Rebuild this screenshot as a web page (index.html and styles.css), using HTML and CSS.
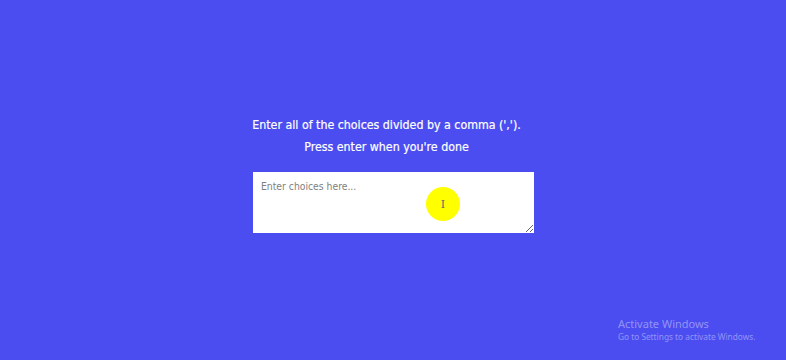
FILE: index.html
```html
<!DOCTYPE html>
<html lang="en">
<head>
<meta charset="utf-8">
<title>Choice picker</title>
<link rel="stylesheet" href="styles.css">
</head>
<body>
<main class="page">
  <div class="prompt">
    <p class="line">Enter all of the choices divided by a comma (',').</p>
    <p class="line">Press enter when you're done</p>
  </div>
  <div class="field">
    <textarea class="choices" placeholder="Enter choices here..."></textarea>
    <div class="cursor-dot"><span class="ibeam">I</span></div>
  </div>
</main>
<div class="watermark">
  <div class="wm-title">Activate Windows</div>
  <div class="wm-sub">Go to Settings to activate Windows.</div>
</div>
</body>
</html>
```
FILE: styles.css
```css
html, body {
  margin: 0;
  padding: 0;
  height: 100%;
}
body {
  background: #4b4df1;
  font-family: "DejaVu Sans Condensed", "DejaVu Sans", sans-serif;
  overflow: hidden;
}
.page {
  display: flex;
  flex-direction: column;
  align-items: center;
  padding-top: 116px;
}
.prompt {
  display: flex;
  flex-direction: column;
  align-items: center;
  gap: 3px;
  margin-right: 13px;
}
.line {
  margin: 0;
  color: #ffffff;
  font-size: 12.3px;
  line-height: 19px;
  -webkit-text-stroke: 0.2px #ffffff;
}
.field {
  position: relative;
  margin-top: 15px;
  margin-left: 1px;
}
.choices {
  display: block;
  box-sizing: border-box;
  width: 281px;
  height: 61px;
  border: none;
  margin: 0;
  padding: 8px 8px;
  font-family: "DejaVu Sans Condensed", "DejaVu Sans", sans-serif;
  font-size: 10.3px;
  background: #ffffff;
  resize: vertical;
  outline: none;
}
.choices::placeholder {
  color: #808080;
}
.cursor-dot {
  position: absolute;
  left: 173px;
  top: 15px;
  width: 34px;
  height: 34px;
  border-radius: 50%;
  background: #ffff00;
  display: flex;
  align-items: center;
  justify-content: center;
}
.ibeam {
  font-family: "DejaVu Serif", serif;
  font-size: 11px;
  color: #666;
}
.watermark {
  position: absolute;
  left: 618px;
  top: 316px;
  color: rgba(255, 255, 255, 0.4);
  font-family: "Noto Sans", sans-serif;
}
.wm-title {
  font-size: 11px;
  line-height: 15px;
}
.wm-sub {
  font-size: 8.3px;
  line-height: 12px;
}
```
